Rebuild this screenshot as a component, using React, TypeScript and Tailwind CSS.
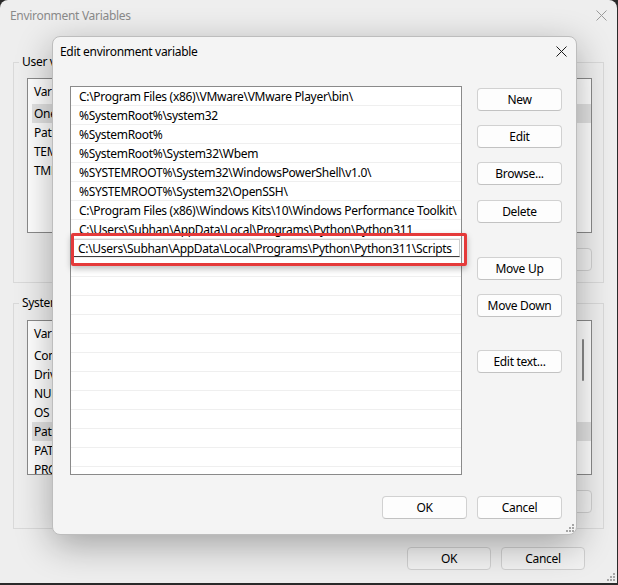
import type { ReactNode } from "react";

// Fenêtre "Environment Variables" en arrière-plan, avec la boîte
// "Edit environment variable" posée par-dessus.

const PATHS = [
  "C:\\Program Files (x86)\\VMware\\VMware Player\\bin\\",
  "%SystemRoot%\\system32",
  "%SystemRoot%",
  "%SystemRoot%\\System32\\Wbem",
  "%SYSTEMROOT%\\System32\\WindowsPowerShell\\v1.0\\",
  "%SYSTEMROOT%\\System32\\OpenSSH\\",
  "C:\\Program Files (x86)\\Windows Kits\\10\\Windows Performance Toolkit\\",
  "C:\\Users\\Subhan\\AppData\\Local\\Programs\\Python\\Python311",
];

const EDITING = "C:\\Users\\Subhan\\AppData\\Local\\Programs\\Python\\Python311\\Scripts";

// seule la colonne "Variable" dépasse de la boîte de dialogue
const USER_VARS = ["OneDrive", "Path", "TEMP", "TMP"];
const SYSTEM_VARS = ["ComSpec", "DriverData", "NUMBER_OF_PROCESSORS", "OS", "Path", "PATHEXT", "PROCESSOR_ARCHITECTURE"];

function Btn({ children, className = "" }: { children: ReactNode; className?: string }) {
  return (
    <button
      type="button"
      className={`flex h-[23px] w-[85px] items-center justify-center rounded-[4px] border border-[#d1d1d1] border-b-[#c2c2c2] bg-[#fdfdfd] text-[12px] leading-none text-black ${className}`}
    >
      {children}
    </button>
  );
}

function BgBtn({ children }: { children: ReactNode }) {
  return (
    <button
      type="button"
      className="flex h-[23px] w-[84px] items-center justify-center rounded-[4px] border border-[#d0d0d0] bg-[#f2f2f2] text-[12px] leading-none text-black"
    >
      {children}
    </button>
  );
}

function Grip() {
  return (
    <svg width="9" height="9" viewBox="0 0 9 9" className="fill-[#a6a6a6]">
      <rect x="7" y="1" width="2" height="2" />
      <rect x="4" y="4" width="2" height="2" />
      <rect x="7" y="4" width="2" height="2" />
      <rect x="1" y="7" width="2" height="2" />
      <rect x="4" y="7" width="2" height="2" />
      <rect x="7" y="7" width="2" height="2" />
    </svg>
  );
}

function CloseX({ color }: { color: string }) {
  return (
    <svg width="11" height="11" viewBox="0 0 11 11" fill="none" stroke={color} strokeWidth="1">
      <path d="M0.5 0.5 L10.5 10.5 M10.5 0.5 L0.5 10.5" />
    </svg>
  );
}

function VarList({ rows, selected, scroll = false }: { rows: string[]; selected: number; scroll?: boolean }) {
  return (
    <div className="relative h-[155px] overflow-hidden border border-[#8a8a8a] bg-white">
      <div className="flex h-[25px] items-center pl-[6px] text-[12px] text-black">Variable</div>
      {rows.map((name, i) => (
        <div
          key={name}
          className={`ml-[4px] flex h-[19px] items-center pl-[2px] text-[12px] text-black ${
            i === selected ? "bg-[#e3e3e3]" : ""
          }`}
        >
          {name}
        </div>
      ))}
      {scroll && (
        <div className="absolute right-[7px] top-[18px] h-[42px] w-[2px] rounded-full bg-[#8a8a8a]" />
      )}
    </div>
  );
}

function EditDialog() {
  const empty = Array.from({ length: 13 });
  return (
    <div className="absolute left-[52px] top-[36px] flex h-[499px] w-[525px] flex-col rounded-[8px] border border-[#bdbdbd] bg-[#f4f4f4] shadow-[0_10px_36px_rgba(0,0,0,0.32)]">
      <div className="flex h-[29px] items-center justify-between pl-[7px] pr-[9px] text-[12px] text-black">
        <span>Edit environment variable</span>
        <CloseX color="#1a1a1a" />
      </div>

      <div className="flex pl-[17px] pt-[20px]">
        <div className="relative">
          <div className="h-[389px] w-[392px] overflow-hidden border border-[#8a8a8a] bg-white">
            {PATHS.map((p) => (
              <div
                key={p}
                className="flex h-[19px] items-center whitespace-nowrap border-b border-[#efefef] pl-[8px] pt-[2px] text-[12px] text-black"
              >
                {p}
              </div>
            ))}
            <div className="flex h-[19px] items-stretch border-b border-[#efefef] pl-[2px] pr-[1px]">
              <div className="flex flex-1 items-center whitespace-nowrap border border-[#cfcfcf] border-b-[#3c3c3c] pl-[4px] pt-[2px] text-[12px] text-black">
                {EDITING}
              </div>
            </div>
            {empty.map((_, i) => (
              <div key={i} className="h-[19px] border-b border-[#efefef]" />
            ))}
          </div>
          <div className="pointer-events-none absolute left-[1px] top-[147px] h-[33px] w-[396px] rounded-[2px] border-[3px] border-[#e53a3a] shadow-[0_3px_6px_rgba(0,0,0,0.25)]" />
        </div>

        <div className="ml-[15px] flex flex-col">
          <Btn className="mt-[2px]">New</Btn>
          <Btn className="mt-[14px]">Edit</Btn>
          <Btn className="mt-[14px]">Browse...</Btn>
          <Btn className="mt-[15px]">Delete</Btn>
          <Btn className="mt-[34px]">Move Up</Btn>
          <Btn className="mt-[14px]">Move Down</Btn>
          <Btn className="mt-[33px]">Edit text...</Btn>
        </div>
      </div>

      <div className="mt-[21px] flex justify-end gap-[10px] pr-[14px]">
        <Btn className="border-[#0067c0] border-b-[#0067c0]">OK</Btn>
        <Btn>Cancel</Btn>
      </div>

      <div className="absolute bottom-[2px] right-[2px]">
        <Grip />
      </div>
    </div>
  );
}

export default function App() {
  return (
    <div className="h-[585px] w-[618px] overflow-hidden bg-[#2a2a2a] font-['Segoe_UI','Noto_Sans',sans-serif] tracking-[-0.3px]">
      <div className="relative flex h-[583px] w-[617px] flex-col rounded-t-[8px] bg-[#eeeeee]">
        <div className="flex h-[31px] items-center justify-between pl-[10px] pr-[10px] text-[12px] text-[#8a8a8a]">
          <span>Environment Variables</span>
          <CloseX color="#9a9a9a" />
        </div>

        <div className="flex flex-col px-[13px]">
          <fieldset className="mt-[23px] border border-[#d9d9d9] pb-[11px] pl-[13px] pr-[11px]">
            <legend className="-ml-[8px] px-[3px] text-[12px] leading-[16px] text-black">
              User variables for Subhan
            </legend>
            <div className="mt-[8px]">
              <VarList rows={USER_VARS} selected={0} />
            </div>
            <div className="mt-[15px] flex justify-end gap-[10px]">
              <BgBtn>New...</BgBtn>
              <BgBtn>Edit...</BgBtn>
              <BgBtn>Delete</BgBtn>
            </div>
          </fieldset>

          <fieldset className="mt-[12px] border border-[#d9d9d9] pb-[15px] pl-[13px] pr-[11px]">
            <legend className="-ml-[8px] px-[3px] text-[12px] leading-[16px] text-black">
              System variables
            </legend>
            <div className="mt-[9px]">
              <VarList rows={SYSTEM_VARS} selected={4} scroll />
            </div>
            <div className="mt-[15px] flex justify-end gap-[10px]">
              <BgBtn>New...</BgBtn>
              <BgBtn>Edit...</BgBtn>
              <BgBtn>Delete</BgBtn>
            </div>
          </fieldset>

          <div className="mt-[18px] flex justify-end gap-[10px] pr-[19px]">
            <BgBtn>OK</BgBtn>
            <BgBtn>Cancel</BgBtn>
          </div>
        </div>

        <div className="absolute bottom-[2px] right-[2px]">
          <Grip />
        </div>

        <EditDialog />
      </div>
    </div>
  );
}
